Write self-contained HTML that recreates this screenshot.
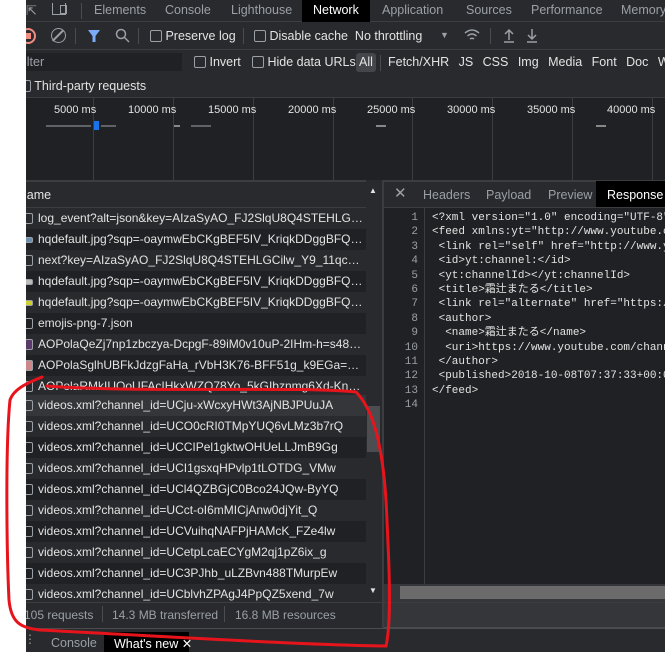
<!DOCTYPE html>
<html><head><meta charset="utf-8"><style>
*{margin:0;padding:0;box-sizing:border-box}
body{width:665px;height:652px;overflow:hidden;background:#fff;font-family:"Liberation Sans","Noto Sans CJK JP",sans-serif;font-size:12px;color:#e3e3e3;position:relative}
.a{position:absolute;white-space:nowrap}
.panel{position:absolute;left:26px;top:0;width:639px;height:652px;background:#202124;overflow:hidden}
.bar{position:absolute;left:0;width:639px;background:#292a2d;border-bottom:1px solid #3c3d40}
.cb{display:inline-block;width:12px;height:12px;border:1px solid #9aa0a6;border-radius:2px;vertical-align:-2px}
.row{position:absolute;left:0;width:340px;height:21px;line-height:21px;padding-left:12px;padding-right:2px;font-size:12px;color:#e3e3e3;overflow:hidden;white-space:nowrap;text-overflow:ellipsis}
.row .ic{position:absolute;left:-2px;top:5px;width:9px;height:11px;border:1px solid #9aa0a6;border-radius:2px}
.code{position:absolute;left:358px;top:211px;font-family:"Liberation Mono","Noto Sans CJK JP",monospace;font-size:11px;line-height:14.4px;color:#e3e3e3}
.ln{position:absolute;left:0;width:34px;text-align:right;color:#9aa0a6}
</style></head><body>
<div class="panel">
  <div class="bar" style="top:0;height:22px;background:#292a2d"></div>
  <div class="a" style="left:0;top:3px;color:#9aa0a6;font-size:13px">⇱</div>
  <div class="a" style="left:26px;top:3px;width:14px;height:12px;border:1.5px solid #9aa0a6;border-top:none"></div>
  <div class="a" style="left:34px;top:5px;width:7px;height:9px;border:1.5px solid #9aa0a6"></div>
  <div class="a" style="left:55px;top:3px;width:1px;height:16px;background:#4a4c50"></div>
  <div class="a" style="left:68px;top:3px;color:#9aa0a6;font-size:12.5px">Elements</div>
  <div class="a" style="left:139px;top:3px;color:#9aa0a6;font-size:12.5px">Console</div>
  <div class="a" style="left:205px;top:3px;color:#9aa0a6;font-size:12.5px">Lighthouse</div>
  <div class="a" style="left:276px;top:0;width:68px;height:22px;background:#000"></div>
  <div class="a" style="left:287px;top:3px;color:#fff;font-size:12.5px">Network</div>
  <div class="a" style="left:356px;top:3px;color:#9aa0a6;font-size:12.5px">Application</div>
  <div class="a" style="left:440px;top:3px;color:#9aa0a6;font-size:12.5px">Sources</div>
  <div class="a" style="left:505px;top:3px;color:#9aa0a6;font-size:12.5px">Performance</div>
  <div class="a" style="left:595px;top:3px;color:#9aa0a6;font-size:12.5px">Memory</div>
  <div class="bar" style="top:22px;height:28px"></div>
  <div class="a" style="left:-6px;top:28px;width:16px;height:16px;border-radius:50%;border:2px solid #f28b82"><div style="position:absolute;left:3px;top:3px;width:6px;height:6px;background:#f28b82"></div></div>
  <div class="a" style="left:25px;top:28px;width:15px;height:15px;border-radius:50%;border:1.5px solid #9aa0a6"><div style="position:absolute;left:5px;top:-1px;width:1.5px;height:15px;background:#9aa0a6;transform:rotate(45deg)"></div></div>
  <div class="a" style="left:49px;top:28px;width:1px;height:16px;background:#4a4c50"></div>
  <svg class="a" style="left:61px;top:29px" width="14" height="14"><path d="M1 1H13L8.5 7V13H5.5V7Z" fill="#7cacf8"/></svg>
  <svg class="a" style="left:89px;top:28px" width="15" height="15"><circle cx="6" cy="6" r="4.5" stroke="#9aa0a6" stroke-width="1.5" fill="none"/><path d="M9.5 9.5L14 14" stroke="#9aa0a6" stroke-width="1.5"/></svg>
  <div class="a" style="left:112px;top:28px;width:1px;height:16px;background:#4a4c50"></div>
  <div class="a" style="left:124px;top:29px;font-size:12.5px"><span class="cb"></span> Preserve log</div>
  <div class="a" style="left:217px;top:28px;width:1px;height:16px;background:#4a4c50"></div>
  <div class="a" style="left:228px;top:29px;font-size:12.5px"><span class="cb"></span> Disable cache &nbsp;No throttling</div>
  <div class="a" style="left:414px;top:30px;color:#9aa0a6;font-size:9px">▼</div>
  <svg class="a" style="left:437px;top:27px" width="18" height="16"><path d="M2 6Q9 0 16 6M4.5 9Q9 5 13.5 9M7 12Q9 10.5 11 12" stroke="#9aa0a6" stroke-width="1.5" fill="none"/></svg>
  <div class="a" style="left:464px;top:28px;width:1px;height:16px;background:#4a4c50"></div>
  <svg class="a" style="left:476px;top:27px" width="14" height="16"><path d="M7 13V3M3 7L7 3L11 7M2 15H12" stroke="#9aa0a6" stroke-width="1.5" fill="none"/></svg>
  <svg class="a" style="left:499px;top:27px" width="14" height="16"><path d="M7 2V12M3 8L7 12L11 8M2 15H12" stroke="#9aa0a6" stroke-width="1.5" fill="none"/></svg>
  <div class="bar" style="top:50px;height:26px;border-bottom:none"></div>
  <div class="a" style="left:0;top:53px;width:156px;height:18px;background:#202124"></div>
  <div class="a" style="left:-2px;top:55px;color:#9aa0a6;font-size:12.5px">ilter</div>
  <div class="a" style="left:168px;top:55px;font-size:12.5px"><span class="cb"></span> Invert</div>
  <div class="a" style="left:226px;top:55px;font-size:12.5px"><span class="cb"></span> Hide data URLs</div>
  <div class="a" style="left:330px;top:53px;width:20px;height:19px;background:#44464b;border-radius:3px"></div>
  <div class="a" style="left:333px;top:55px;font-size:12.5px">All</div>
  <div class="a" style="left:354px;top:55px;width:1px;height:16px;background:#4a4c50"></div>
  <div class="a" style="left:362px;top:55px;font-size:12.5px;word-spacing:6px">Fetch/XHR JS CSS Img Media Font Doc WS</div>
  <div class="bar" style="top:76px;height:22px"></div>
  <div class="a" style="left:0;top:79px;font-size:12.5px"><span class="cb" style="margin-left:-7px"></span> Third-party requests</div>
  <div class="a" style="left:0;top:98px;width:639px;height:82px;background:#202124"></div>
  <div class="a" style="left:67px;top:98px;width:1px;height:82px;background:#3c3d40"></div>
  <div class="a" style="left:147px;top:98px;width:1px;height:82px;background:#3c3d40"></div>
  <div class="a" style="left:227px;top:98px;width:1px;height:82px;background:#3c3d40"></div>
  <div class="a" style="left:307px;top:98px;width:1px;height:82px;background:#3c3d40"></div>
  <div class="a" style="left:386px;top:98px;width:1px;height:82px;background:#3c3d40"></div>
  <div class="a" style="left:466px;top:98px;width:1px;height:82px;background:#3c3d40"></div>
  <div class="a" style="left:546px;top:98px;width:1px;height:82px;background:#3c3d40"></div>
  <div class="a" style="left:626px;top:98px;width:1px;height:82px;background:#3c3d40"></div>
  <div class="a" style="left:28px;top:104px;font-size:11px">5000 ms</div>
  <div class="a" style="left:102px;top:104px;font-size:11px">10000 ms</div>
  <div class="a" style="left:182px;top:104px;font-size:11px">15000 ms</div>
  <div class="a" style="left:262px;top:104px;font-size:11px">20000 ms</div>
  <div class="a" style="left:341px;top:104px;font-size:11px">25000 ms</div>
  <div class="a" style="left:421px;top:104px;font-size:11px">30000 ms</div>
  <div class="a" style="left:501px;top:104px;font-size:11px">35000 ms</div>
  <div class="a" style="left:581px;top:104px;font-size:11px">40000 ms</div>
  <div class="a" style="left:20px;top:125px;width:45px;height:2px;background:#5f6368"></div>
  <div class="a" style="left:68px;top:121px;width:5px;height:9px;background:#1a73e8"></div>
  <div class="a" style="left:75px;top:125px;width:15px;height:2px;background:#5f6368"></div>
  <div class="a" style="left:148px;top:125px;width:6px;height:2px;background:#888"></div>
  <div class="a" style="left:165px;top:125px;width:20px;height:2px;background:#5f6368"></div>
  <div class="a" style="left:350px;top:125px;width:10px;height:2px;background:#888"></div>
  <div class="a" style="left:570px;top:125px;width:10px;height:2px;background:#888"></div>
  <div class="a" style="left:0;top:180px;width:356px;height:28px;background:#292a2d;border-top:2px solid #3c3d40;border-bottom:1px solid #3c3d40"></div>
  <div class="a" style="left:-2px;top:188px;font-size:12.5px">lame</div>
  <div class="a" style="left:340px;top:180px;width:16px;height:422px;background:#292a2d"></div>
  <div class="a" style="left:343px;top:186px;font-size:8px">▲</div>
  <div class="a" style="left:341px;top:406px;width:13px;height:46px;background:#4b4d51"></div>
  <div class="a" style="left:343px;top:586px;font-size:8px">▼</div>
  <div class="a" style="left:356px;top:180px;width:2px;height:448px;background:#3c3d40"></div>
  <div class="row" style="top:208px;background:#292a2d"><span class="ic"></span>log_event?alt=json&amp;key=AIzaSyAO_FJ2SlqU8Q4STEHLGCilw_Y9_11qcW8</div>
  <div class="row" style="top:229px"><span class="ic" style="background:#6a8fb0;height:6px;top:8px"></span>hqdefault.jpg?sqp=-oaymwEbCKgBEF5IV_KriqkDDggBFQAAiEIYAXABwAEG</div>
  <div class="row" style="top:250px;background:#292a2d"><span class="ic"></span>next?key=AIzaSyAO_FJ2SlqU8Q4STEHLGCilw_Y9_11qcW8&amp;prettyPrint</div>
  <div class="row" style="top:271px"><span class="ic" style="background:#bbb;height:6px;top:8px"></span>hqdefault.jpg?sqp=-oaymwEbCKgBEF5IV_KriqkDDggBFQAAiEIYAXABwAEG</div>
  <div class="row" style="top:292px;background:#292a2d"><span class="ic" style="background:#cfd02a;height:6px;top:8px"></span>hqdefault.jpg?sqp=-oaymwEbCKgBEF5IV_KriqkDDggBFQAAiEIYAXABwAEG</div>
  <div class="row" style="top:313px"><span class="ic"></span>emojis-png-7.json</div>
  <div class="row" style="top:334px;background:#292a2d"><span class="ic" style="background:#5a3a6a"></span>AOPolaQeZj7np1zbczya-DcpgF-89iM0v10uP-2IHm-h=s48-c-k-c0x00ffffff</div>
  <div class="row" style="top:355px"><span class="ic" style="background:#c88"></span>AOPolaSglhUBFkJdzgFaHa_rVbH3K76-BFF51g_k9EGa=s48-c-k-c0x00ffffff</div>
  <div class="row" style="top:376px;background:#292a2d;height:19px"><span class="ic"></span>AOPolaRMkIUOoUFAcIHkxWZQ78Yo_5kGIbznmg6Xd-KnPw=s48-c-k</div>
  <div class="row" style="top:395px;background:#35363a"><span class="ic"></span>videos.xml?channel_id=UCju-xWcxyHWt3AjNBJPUuJA</div>
  <div class="row" style="top:416px;background:#292a2d"><span class="ic"></span>videos.xml?channel_id=UCO0cRI0TMpYUQ6vLMz3b7rQ</div>
  <div class="row" style="top:437px"><span class="ic"></span>videos.xml?channel_id=UCCIPel1gktwOHUeLLJmB9Gg</div>
  <div class="row" style="top:458px;background:#292a2d"><span class="ic"></span>videos.xml?channel_id=UCI1gsxqHPvlp1tLOTDG_VMw</div>
  <div class="row" style="top:479px"><span class="ic"></span>videos.xml?channel_id=UCl4QZBGjC0Bco24JQw-ByYQ</div>
  <div class="row" style="top:500px;background:#292a2d"><span class="ic"></span>videos.xml?channel_id=UCct-oI6mMICjAnw0djYit_Q</div>
  <div class="row" style="top:521px"><span class="ic"></span>videos.xml?channel_id=UCVuihqNAFPjHAMcK_FZe4lw</div>
  <div class="row" style="top:542px;background:#292a2d"><span class="ic"></span>videos.xml?channel_id=UCetpLcaECYgM2qj1pZ6ix_g</div>
  <div class="row" style="top:563px"><span class="ic"></span>videos.xml?channel_id=UC3PJhb_uLZBvn488TMurpEw</div>
  <div class="row" style="top:584px;background:#292a2d;height:18px"><span class="ic"></span>videos.xml?channel_id=UCblvhZPAgJ4PpQZ5xend_7w</div>
  <div class="a" style="left:0;top:602px;width:356px;height:26px;background:#292a2d;border-top:1px solid #3c3d40"></div>
  <div class="a" style="left:-2px;top:608px;color:#9aa0a6;font-size:12px">105 requests</div>
  <div class="a" style="left:76px;top:606px;width:1px;height:16px;background:#4a4c50"></div>
  <div class="a" style="left:86px;top:608px;color:#9aa0a6;font-size:12px">14.3 MB transferred</div>
  <div class="a" style="left:198px;top:606px;width:1px;height:16px;background:#4a4c50"></div>
  <div class="a" style="left:209px;top:608px;color:#9aa0a6;font-size:12px">16.8 MB resources</div>
  <div class="a" style="left:358px;top:180px;width:281px;height:28px;background:#292a2d;border-top:2px solid #3c3d40;border-bottom:1px solid #3c3d40"></div>
  <div class="a" style="left:368px;top:184px;color:#9aa0a6;font-size:15px">✕</div>
  <div class="a" style="left:397px;top:188px;color:#9aa0a6;font-size:12.5px">Headers</div>
  <div class="a" style="left:460px;top:188px;color:#9aa0a6;font-size:12.5px">Payload</div>
  <div class="a" style="left:522px;top:188px;color:#9aa0a6;font-size:12.5px">Preview</div>
  <div class="a" style="left:570px;top:181px;width:69px;height:26px;background:#000"></div>
  <div class="a" style="left:581px;top:188px;color:#fff;font-size:12.5px">Response</div>
  <div class="a" style="left:398px;top:208px;width:1px;height:376px;background:#3c3d40"></div>
  <div class="code">
    <div class="ln" style="top:0">1</div><div class="ln" style="top:14.4px">2</div><div class="ln" style="top:28.8px">3</div><div class="ln" style="top:43.2px">4</div><div class="ln" style="top:57.6px">5</div><div class="ln" style="top:72px">6</div><div class="ln" style="top:86.4px">7</div><div class="ln" style="top:100.8px">8</div><div class="ln" style="top:115.2px">9</div><div class="ln" style="top:129.6px">10</div><div class="ln" style="top:144px">11</div><div class="ln" style="top:158.4px">12</div><div class="ln" style="top:172.8px">13</div><div class="ln" style="top:187.2px">14</div>
    <pre style="position:absolute;left:48px;top:0;font:inherit;line-height:14.4px">&lt;?xml version="1.0" encoding="UTF-8"?&gt;
&lt;feed xmlns:yt="http://www.youtube.com/xml
 &lt;link rel="self" href="http://www.youtube
 &lt;id&gt;yt:channel:&lt;/id&gt;
 &lt;yt:channelId&gt;&lt;/yt:channelId&gt;
 &lt;title&gt;霜辻またる&lt;/title&gt;
 &lt;link rel="alternate" href="https://www.
 &lt;author&gt;
  &lt;name&gt;霜辻またる&lt;/name&gt;
  &lt;uri&gt;https://www.youtube.com/channel/
 &lt;/author&gt;
 &lt;published&gt;2018-10-08T07:37:33+00:00
&lt;/feed&gt;</pre>
  </div>
  <div class="a" style="left:358px;top:584px;width:281px;height:18px;background:#35363a"></div>
  <div class="a" style="left:374px;top:586px;width:265px;height:13px;background:#6b6b6b"></div>
  <div class="a" style="left:358px;top:602px;width:281px;height:26px;background:#35363a;border-top:1px solid #3c3d40;border-bottom:1px solid #4a4c50"></div>
  <div class="a" style="left:0;top:628px;width:639px;height:24px;background:#292a2d;border-top:1px solid #4a4c50"></div>
  <div class="a" style="left:-2px;top:632px;color:#9aa0a6;font-size:12px">⋮</div>
  <div class="a" style="left:25px;top:636px;color:#9aa0a6;font-size:12.5px">Console</div>
  <div class="a" style="left:78px;top:632px;width:85px;height:20px;background:#000"></div>
  <div class="a" style="left:88px;top:636px;color:#fff;font-size:12.5px">What's new ✕</div>
</div>
<svg class="a" style="left:0;top:0" width="665" height="652"><path d="M42,377 C30,382 14,388 10,400 C5,450 7,560 9,600 C11,622 20,628 40,630 C120,634 300,645 386,646 C392,620 389,560 386,500 C382,440 372,408 356,392 C300,386 140,393 47,386" fill="none" stroke="#e8141c" stroke-width="3" stroke-linecap="round"/></svg>
</body></html>
